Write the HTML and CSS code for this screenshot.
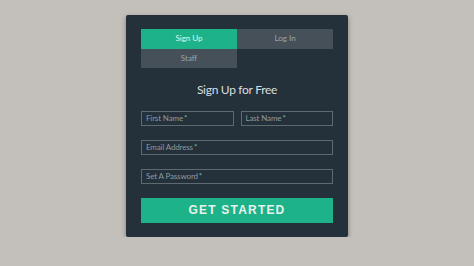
FILE: index.html
```html
<!DOCTYPE html>
<html>
<head>
	<title>Sign Up</title>
	<link rel="stylesheet" href="styles.css">
</head>
<body>
	<div class="form">
		<div class="tabs">
			<div class="tab active">Sign Up</div>
			<div class="tab">Log In</div>
			<div class="tab">Staff</div>
		</div>
		<h1>Sign Up for Free</h1>
		<div class="row">
			<div class="field"><span>First Name<i>*</i></span></div>
			<div class="field"><span>Last Name<i>*</i></span></div>
		</div>
		<div class="row">
			<div class="field"><span>Email Address<i>*</i></span></div>
		</div>
		<div class="row">
			<div class="field"><span>Set A Password<i>*</i></span></div>
		</div>
		<button class="button">GET STARTED</button>
	</div>
</body>
</html>
```

FILE: styles.css
```css
* {
	box-sizing: border-box;
}
body {
	margin: 0;
	background-color: #c3bfbb;
	font-family: Lato, "Open Sans", sans-serif;
}
.form {
	width: 222px;
	margin: 15px auto 0;
	padding: 14px 15px 14px;
	background-color: #24303a;
	border-radius: 2px;
	box-shadow: 0 2px 5px rgba(0, 0, 0, 0.35);
}
.tabs {
	display: flex;
	flex-wrap: wrap;
}
.tab {
	width: 50%;
	height: 19.7px;
	line-height: 19.7px;
	text-align: center;
	font-size: 8px;
	color: #9aa6a8;
	background-color: #455058;
}
.tab.active {
	background-color: #1db287;
	color: #e6f4ef;
}
h1 {
	margin: 14px 0 13px;
	height: 16px;
	line-height: 16px;
	text-align: center;
	font-size: 12px;
	letter-spacing: -0.3px;
	font-weight: normal;
	color: #d9dfe0;
}
.row {
	display: flex;
	gap: 7px;
	margin-bottom: 14.5px;
}
.field {
	flex: 1;
	height: 14.4px;
	border: 1px solid #5d6a70;
	padding-left: 4px;
	font-size: 8px;
	letter-spacing: -0.15px;
	line-height: 12.4px;
	color: #8d9ba0;
}
.field i {
	font-style: normal;
	color: #6fbfa5;
	margin-left: 1px;
}
.button {
	display: block;
	width: 100%;
	height: 24.7px;
	border: none;
	background-color: #1db287;
	color: #e8f2ef;
	font-family: "Liberation Sans", Arial, sans-serif;
	font-weight: bold;
	font-size: 12px;
	letter-spacing: 1.2px;
}
```
